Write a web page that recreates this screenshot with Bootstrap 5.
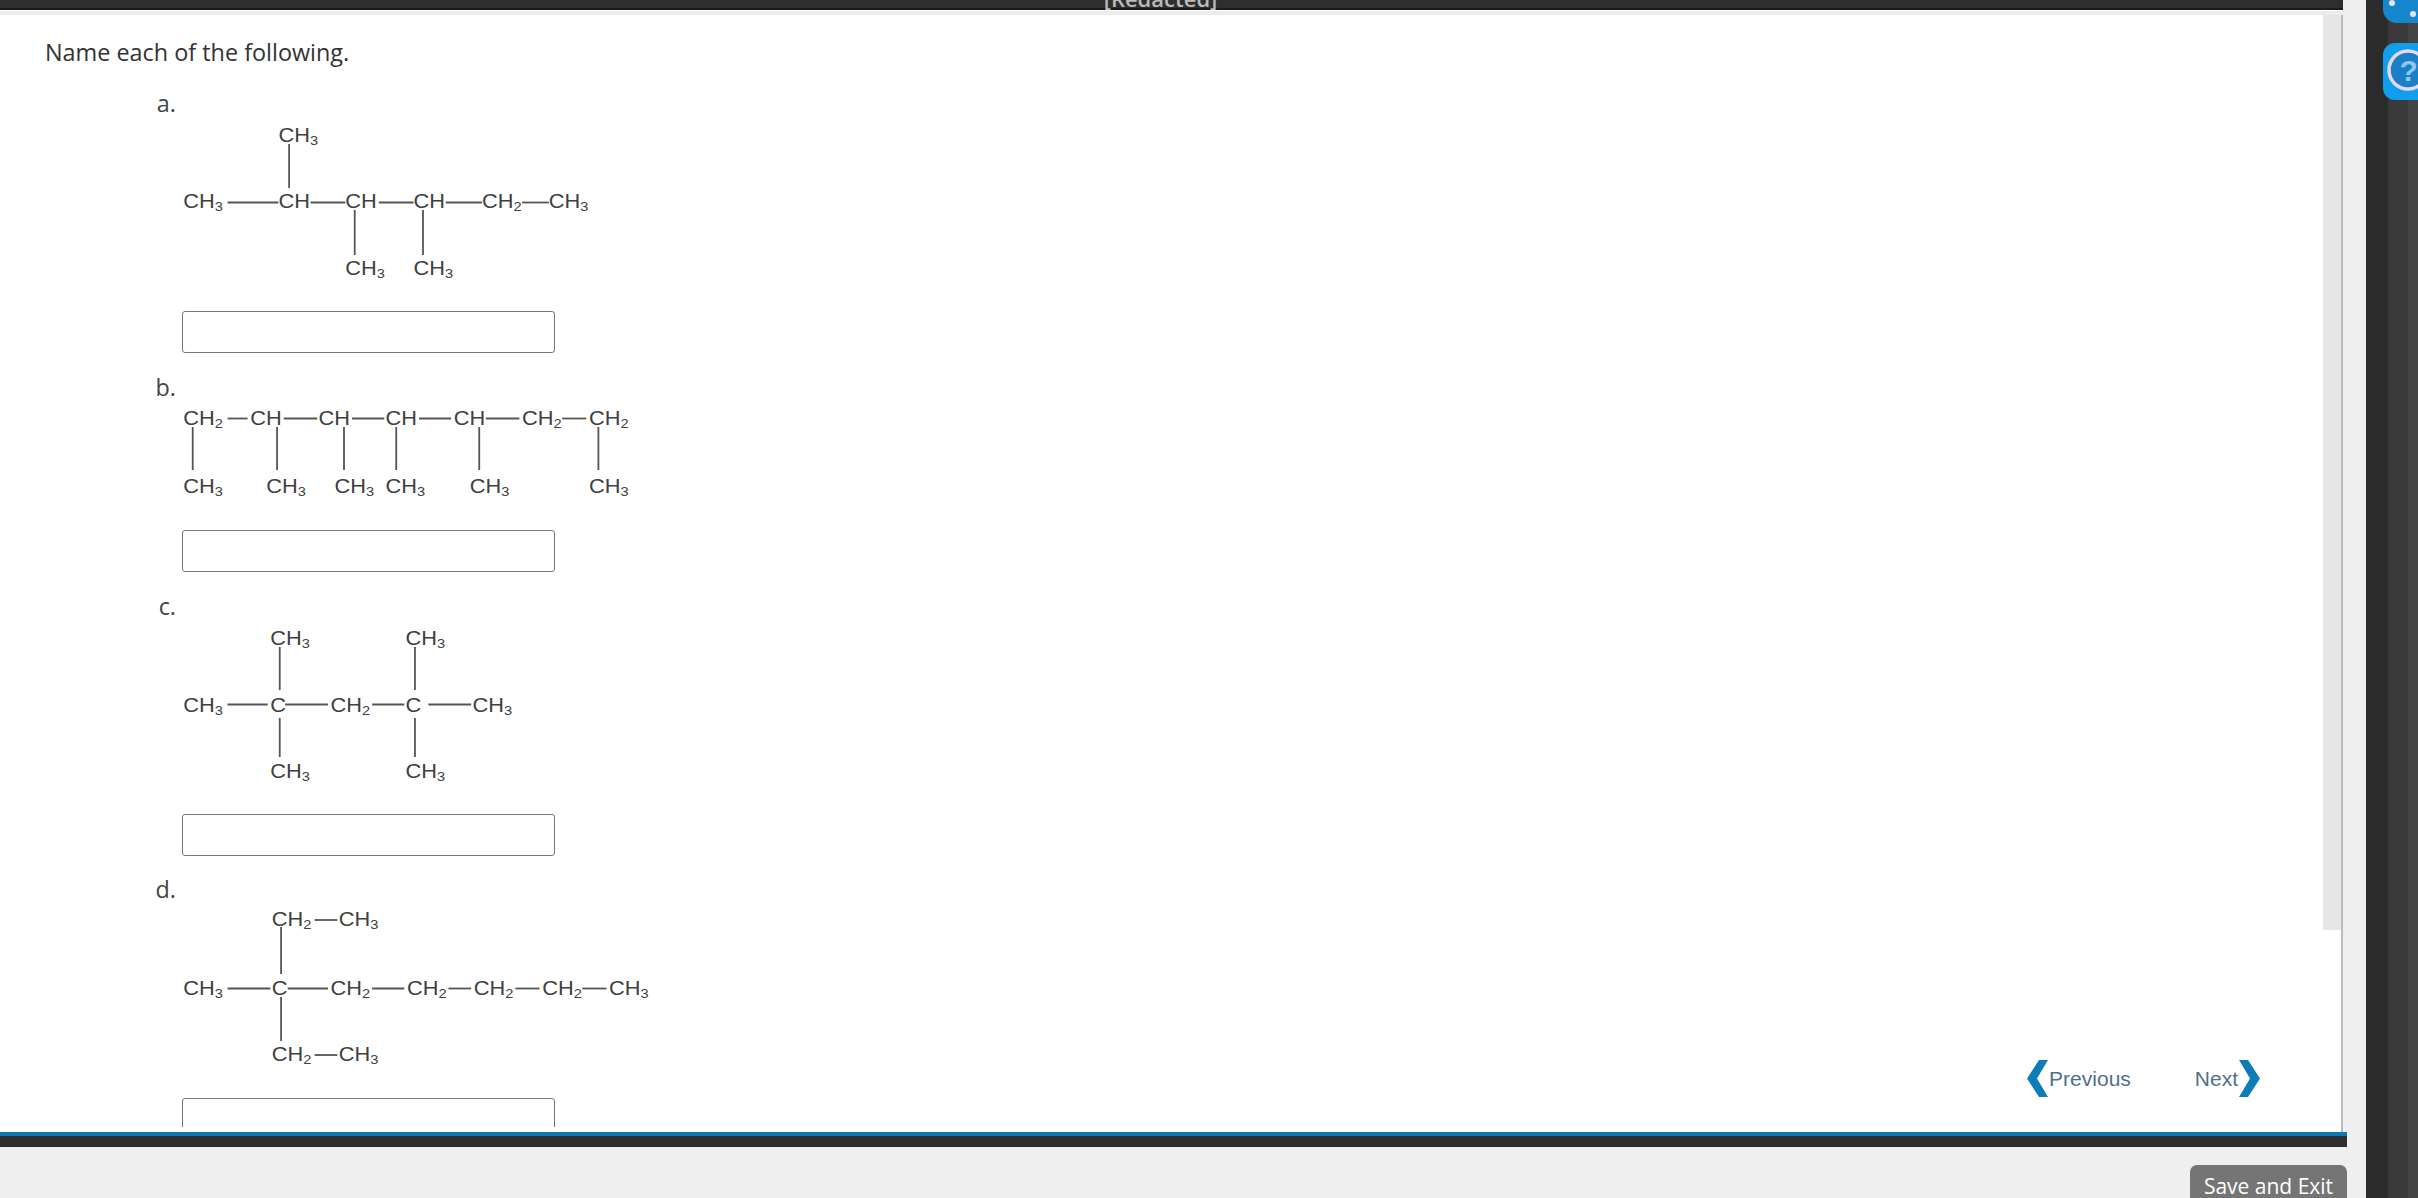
<!DOCTYPE html>
<html lang="en">
<head>
<meta charset="utf-8">
<title>Name each of the following</title>
<link href="https://cdn.jsdelivr.net/npm/bootstrap@5.3.0/dist/css/bootstrap.min.css" rel="stylesheet">
<style>
html,body{height:100%;}
body{overflow:hidden;background:#efefef;font-family:"Open Sans",sans-serif;color:#333;}
.app-shell{height:1198px;}
.main-col{width:2366px;flex:none;}
.top-strip{height:15px;width:2343px;background:linear-gradient(#2e2e2e 0 8px,#1c1c1c 8px 10px,#fff 10px 11px,#ececec 11px 15px);overflow:hidden;padding-right:22px;}
.top-title{height:20px;margin-top:-17px;font-size:22px;line-height:30px;font-weight:600;color:#bbb;}
.panel{height:1117px;width:2343px;background:#fff;position:relative;border-right:2px solid #bdbdbd;}
.q-column{width:2323px;}
.q-scroll{height:1112px;overflow:hidden;padding-top:19px;}
.thumb-track{width:18px;flex:none;}
.thumb{height:915px;background:#e6e6e6;}
.prompt{margin-left:45px;font-size:23.4px;line-height:36px;color:#333;}
.gap-top{height:18px;}
.q-item{margin-bottom:19px;}
.q-item.tight{margin-bottom:18px;}
.q-label{width:176px;font-size:23.4px;line-height:30px;height:30px;color:#444;}
.chem{display:block;margin-left:182px;}
.chem text{font-family:"Liberation Sans",sans-serif;font-size:19.4px;fill:#404040;transform-box:fill-box;transform-origin:0 0;transform:scaleX(.84);}
.chem .sb{font-size:13px;}
.chem line{stroke:#555;stroke-width:1.8;vector-effect:non-scaling-stroke;}
.answer.form-control{margin-left:182px;width:373px;height:42px;min-height:0;border:1.5px solid #777;border-radius:3px;padding:0 6px;}
.pager{position:absolute;right:81px;bottom:35px;gap:64px;font-family:"Liberation Sans",sans-serif;font-size:21px;}
.pager a{color:#4f6f8a;text-decoration:none;gap:1px;}
.chev{fill:#0d7db8;flex:none;}
.base-bar{height:15px;width:2347px;background:#2e2e2e;border-top:4px solid #0d78b3;flex:none;}
.foot{height:51px;overflow:hidden;padding-right:19px;}
.exit-btn.btn{width:157px;height:33px;margin-top:18px;padding:8px 0 0;background:#757575;border:0;border-radius:7px 7px 0 0;color:#fff;font-size:21px;line-height:24px;}
.rail{width:52px;flex:none;padding-left:17px;overflow:hidden;gap:20px;background:linear-gradient(90deg,#2b2b2b 0 22px,#3a3a3a 22px 42px,#444 42px);}
.rail-ico{flex:none;display:block;}
.ico-top{margin-top:-34px;}
.rail-ico text{font-family:"Liberation Sans",sans-serif;font-size:30px;font-weight:700;fill:#8fc8ee;}
</style>
</head>
<body>
<div class="app-shell d-flex">
  <div class="main-col d-flex flex-column">
    <div class="top-strip d-flex justify-content-center">
      <div class="top-title">[Redacted]</div>
    </div>
    <div class="panel d-flex">
      <div class="q-column">
        <div class="q-scroll">
          <div class="prompt">Name each of the following.</div>
          <div class="gap-top"></div>

          <div class="q-item">
            <div class="q-label text-end">a.</div>
            <svg class="chem" width="482" height="193" viewBox="136 118 360 193" preserveAspectRatio="none">
              <text x="208" y="142">CH<tspan class="sb" dy="3">3</tspan></text>
              <line x1="216" y1="144" x2="216" y2="188"/>
              <text x="137" y="208">CH<tspan class="sb" dy="3">3</tspan></text>
              <line x1="170" y1="202.500" x2="208" y2="202.500"/>
              <text x="208" y="208">CH</text>
              <line x1="232" y1="202.500" x2="258" y2="202.500"/>
              <text x="258" y="208">CH</text>
              <line x1="283" y1="202.500" x2="309" y2="202.500"/>
              <text x="309" y="208">CH</text>
              <line x1="333" y1="202.500" x2="360" y2="202.500"/>
              <text x="360" y="208">CH<tspan class="sb" dy="3">2</tspan></text>
              <line x1="390" y1="202.500" x2="410" y2="202.500"/>
              <text x="410" y="208">CH<tspan class="sb" dy="3">3</tspan></text>
              <line x1="265" y1="210" x2="265" y2="255"/>
              <line x1="316" y1="210" x2="316" y2="255"/>
              <text x="258" y="275">CH<tspan class="sb" dy="3">3</tspan></text>
              <text x="309" y="275">CH<tspan class="sb" dy="3">3</tspan></text>
            </svg>
            <input class="form-control answer" type="text" aria-label="Name a">
          </div>

          <div class="q-item">
            <div class="q-label text-end">b.</div>
            <svg class="chem" width="482" height="128" viewBox="136 402 360 128" preserveAspectRatio="none">
              <text x="137" y="425">CH<tspan class="sb" dy="3">2</tspan></text>
              <line x1="170" y1="418.500" x2="185" y2="418.500"/>
              <text x="187" y="425">CH</text>
              <line x1="212" y1="418.500" x2="237" y2="418.500"/>
              <text x="238" y="425">CH</text>
              <line x1="263" y1="418.500" x2="287" y2="418.500"/>
              <text x="288" y="425">CH</text>
              <line x1="313" y1="418.500" x2="337" y2="418.500"/>
              <text x="339" y="425">CH</text>
              <line x1="363" y1="418.500" x2="388" y2="418.500"/>
              <text x="390" y="425">CH<tspan class="sb" dy="3">2</tspan></text>
              <line x1="420" y1="418.500" x2="438" y2="418.500"/>
              <text x="440" y="425">CH<tspan class="sb" dy="3">2</tspan></text>
              <line x1="144" y1="427" x2="144" y2="470"/>
              <line x1="207" y1="427" x2="207" y2="470"/>
              <line x1="257" y1="427" x2="257" y2="470"/>
              <line x1="296" y1="427" x2="296" y2="470"/>
              <line x1="358" y1="427" x2="358" y2="470"/>
              <line x1="447" y1="427" x2="447" y2="470"/>
              <text x="137" y="493">CH<tspan class="sb" dy="3">3</tspan></text>
              <text x="199" y="493">CH<tspan class="sb" dy="3">3</tspan></text>
              <text x="250" y="493">CH<tspan class="sb" dy="3">3</tspan></text>
              <text x="288" y="493">CH<tspan class="sb" dy="3">3</tspan></text>
              <text x="351" y="493">CH<tspan class="sb" dy="3">3</tspan></text>
              <text x="440" y="493">CH<tspan class="sb" dy="3">3</tspan></text>
            </svg>
            <input class="form-control answer" type="text" aria-label="Name b">
          </div>

          <div class="q-item tight">
            <div class="q-label text-end">c.</div>
            <svg class="chem" width="482" height="193" viewBox="136 621 360 193" preserveAspectRatio="none">
              <text x="202" y="645">CH<tspan class="sb" dy="3">3</tspan></text>
              <text x="303" y="645">CH<tspan class="sb" dy="3">3</tspan></text>
              <line x1="209" y1="647" x2="209" y2="690"/>
              <line x1="310" y1="647" x2="310" y2="690"/>
              <text x="137" y="712">CH<tspan class="sb" dy="3">3</tspan></text>
              <line x1="170" y1="704.500" x2="200" y2="704.500"/>
              <text x="202" y="712">C</text>
              <line x1="213" y1="704.500" x2="245" y2="704.500"/>
              <text x="247" y="712">CH<tspan class="sb" dy="3">2</tspan></text>
              <line x1="278" y1="704.500" x2="302" y2="704.500"/>
              <text x="303" y="712">C</text>
              <line x1="320" y1="704.500" x2="352" y2="704.500"/>
              <text x="353" y="712">CH<tspan class="sb" dy="3">3</tspan></text>
              <line x1="209" y1="718" x2="209" y2="757"/>
              <line x1="310" y1="718" x2="310" y2="757"/>
              <text x="202" y="778">CH<tspan class="sb" dy="3">3</tspan></text>
              <text x="303" y="778">CH<tspan class="sb" dy="3">3</tspan></text>
            </svg>
            <input class="form-control answer" type="text" aria-label="Name c">
          </div>

          <div class="q-item">
            <div class="q-label text-end">d.</div>
            <svg class="chem" width="482" height="194" viewBox="136 905 360 194" preserveAspectRatio="none">
              <text x="203" y="927">CH<tspan class="sb" dy="3">2</tspan></text>
              <line x1="235" y1="921" x2="252" y2="921"/>
              <text x="253" y="927">CH<tspan class="sb" dy="3">3</tspan></text>
              <line x1="210" y1="928" x2="210" y2="975"/>
              <text x="137" y="996">CH<tspan class="sb" dy="3">3</tspan></text>
              <line x1="170" y1="989.500" x2="202" y2="989.500"/>
              <text x="203" y="996">C</text>
              <line x1="215" y1="989.500" x2="245" y2="989.500"/>
              <text x="247" y="996">CH<tspan class="sb" dy="3">2</tspan></text>
              <line x1="278" y1="989.500" x2="302" y2="989.500"/>
              <text x="304" y="996">CH<tspan class="sb" dy="3">2</tspan></text>
              <line x1="335" y1="989.500" x2="352" y2="989.500"/>
              <text x="354" y="996">CH<tspan class="sb" dy="3">2</tspan></text>
              <line x1="385" y1="989.500" x2="403" y2="989.500"/>
              <text x="405" y="996">CH<tspan class="sb" dy="3">2</tspan></text>
              <line x1="435" y1="989.500" x2="453" y2="989.500"/>
              <text x="455" y="996">CH<tspan class="sb" dy="3">3</tspan></text>
              <line x1="210" y1="998" x2="210" y2="1042"/>
              <text x="203" y="1062">CH<tspan class="sb" dy="3">2</tspan></text>
              <line x1="235" y1="1056" x2="252" y2="1056"/>
              <text x="253" y="1062">CH<tspan class="sb" dy="3">3</tspan></text>
            </svg>
            <input class="form-control answer" type="text" aria-label="Name d">
          </div>
        </div>
      </div>
      <div class="thumb-track"><div class="thumb"></div></div>
      <nav class="pager d-flex align-items-center">
        <a href="#" class="d-flex align-items-center">
          <svg class="chev" width="21" height="37" viewBox="0 0 21 37"><path d="M12 0H21L10 18.500L21 37H12L0 18.500Z"/></svg>
          <span>Previous</span>
        </a>
        <a href="#" class="d-flex align-items-center">
          <span>Next</span>
          <svg class="chev" width="21" height="37" viewBox="0 0 21 37"><path d="M9 0H0L11 18.500L0 37H9L21 18.500Z"/></svg>
        </a>
      </nav>
    </div>
    <div class="base-bar"></div>
    <div class="foot d-flex justify-content-end">
      <button type="button" class="btn exit-btn">Save and Exit</button>
    </div>
  </div>
  <div class="rail d-flex flex-column">
    <svg class="rail-ico ico-top" width="57" height="57" viewBox="0 0 57 57">
      <rect width="57" height="57" rx="14" fill="#1587cf"/>
      <circle cx="9" cy="37" r="3" fill="#e8e4f4"/>
      <circle cx="30" cy="48" r="3" fill="#e8e4f4"/>
    </svg>
    <svg class="rail-ico" width="57" height="57" viewBox="0 0 57 57">
      <rect width="57" height="57" rx="12" fill="#0f9fec"/>
      <circle cx="25" cy="27" r="19" fill="#1b7fc6" stroke="#e6d9ee" stroke-width="3.500"/>
      <text x="16.500" y="38">?</text>
    </svg>
  </div>
</div>
<script src="https://cdn.jsdelivr.net/npm/bootstrap@5.3.0/dist/js/bootstrap.bundle.min.js"></script>
</body>
</html>
